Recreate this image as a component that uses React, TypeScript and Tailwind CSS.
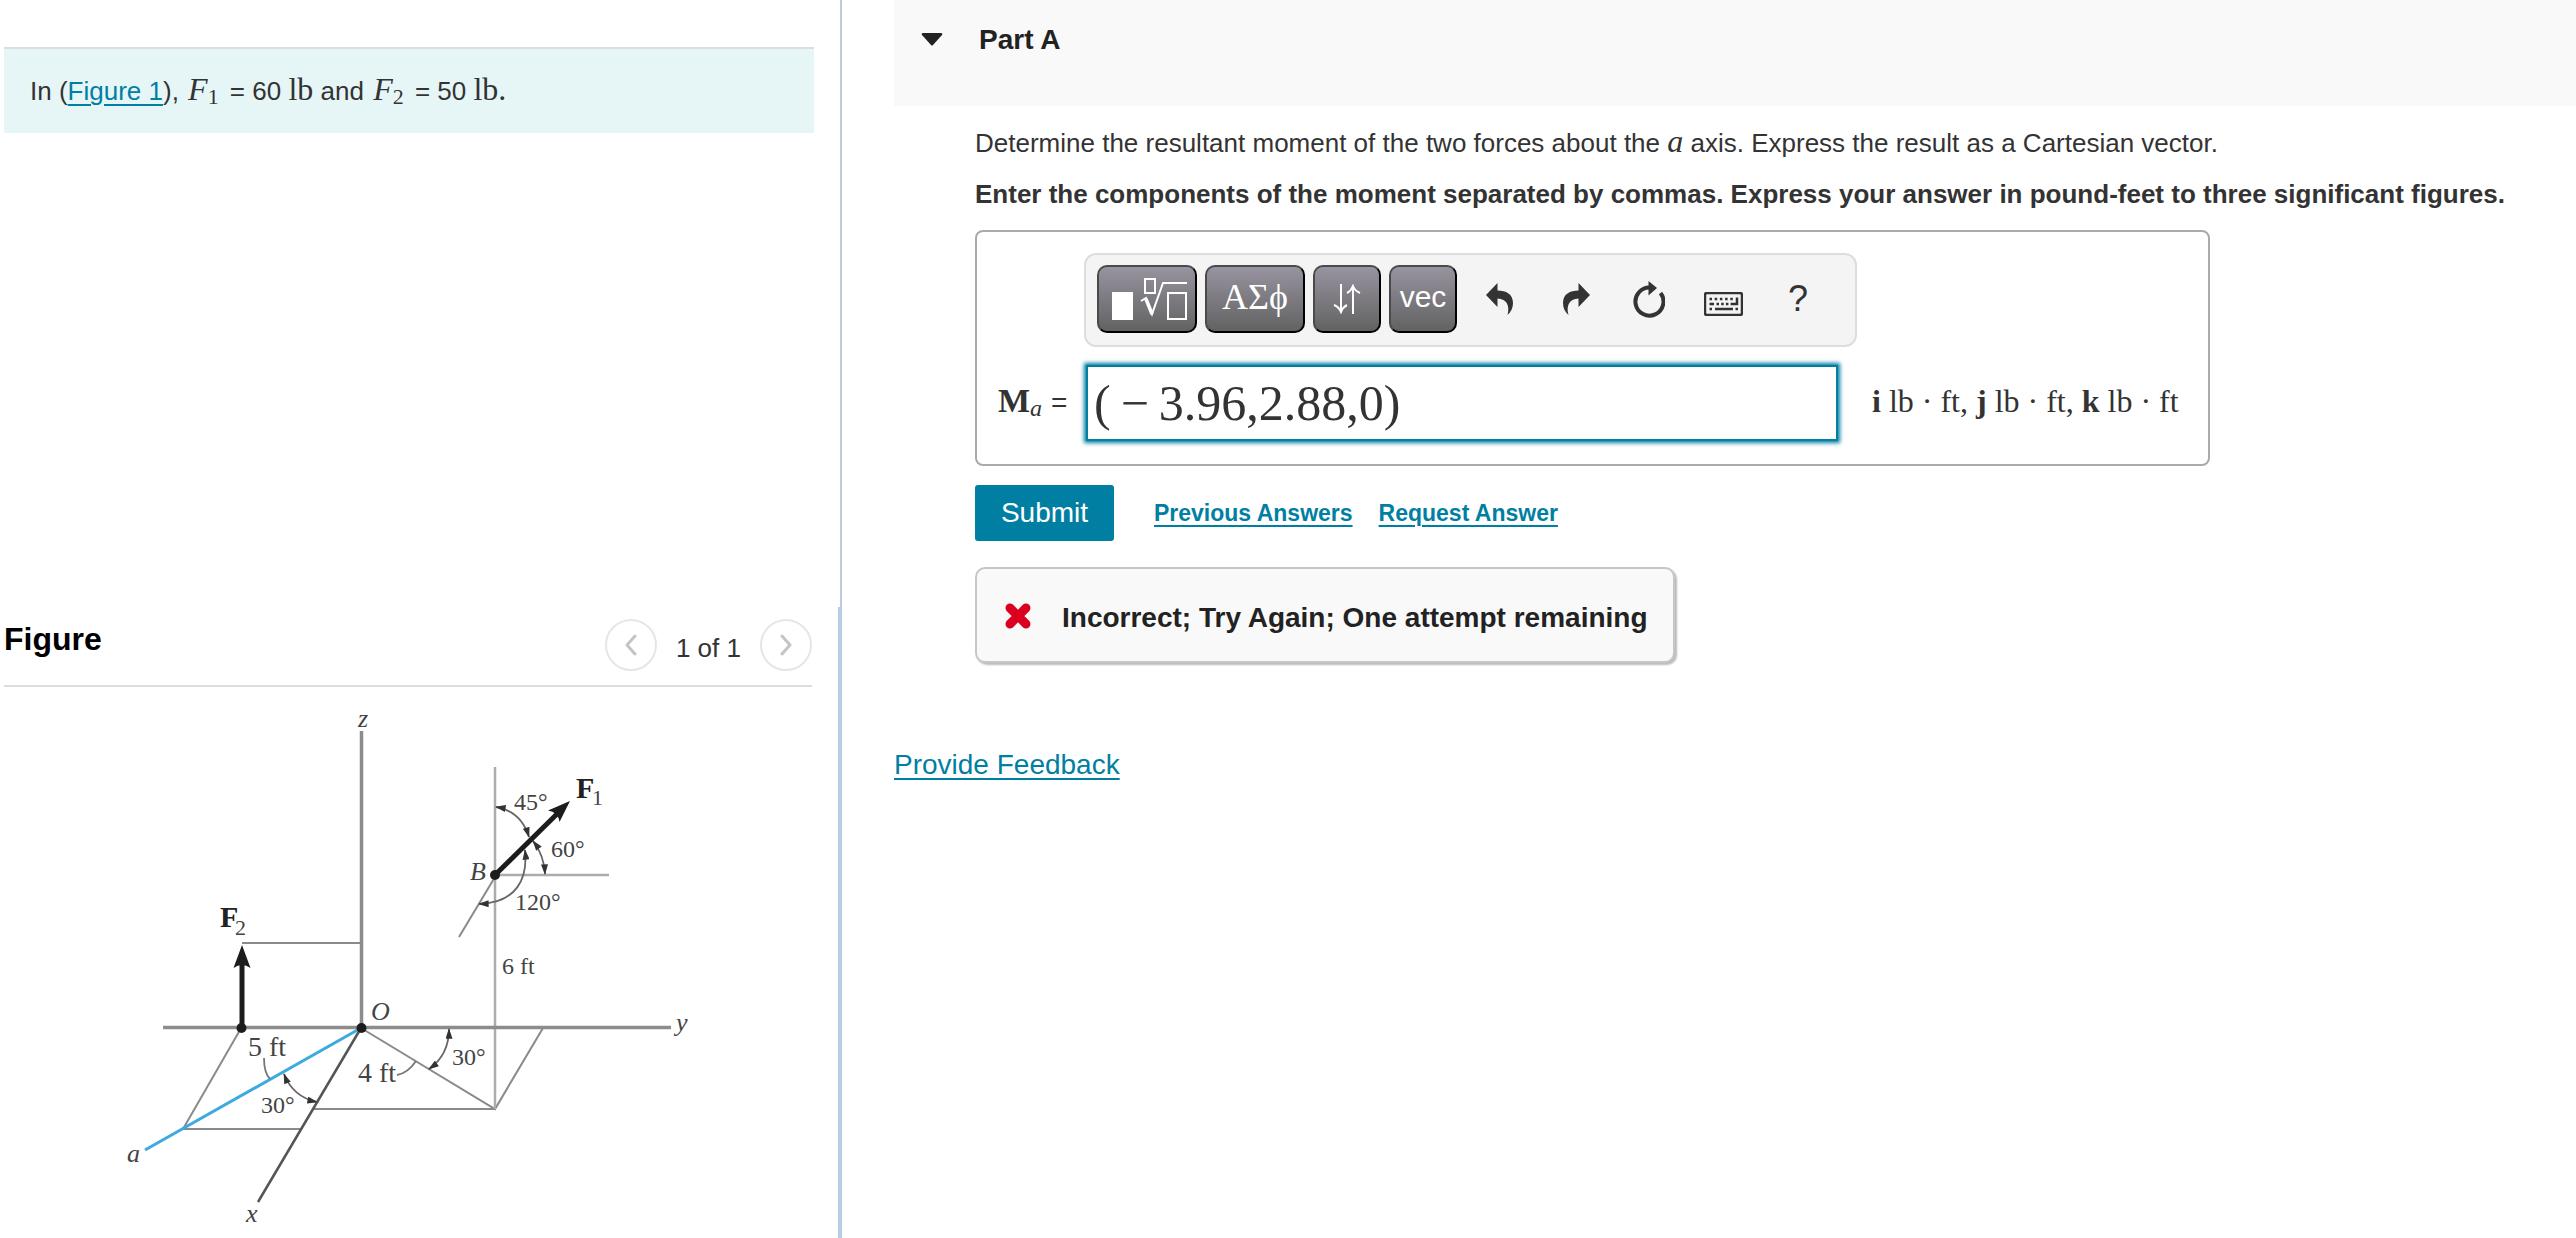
import type { ReactNode } from 'react';

interface ChildrenProps {
  children: ReactNode;
}

function MathText({ children }: ChildrenProps) {
  return (
    <span className="font-['Liberation_Serif',serif] text-[32px] leading-none">
      {children}
    </span>
  );
}

interface ForceSymbolProps {
  index: number;
}

function ForceSymbol({ index }: ForceSymbolProps) {
  return (
    <span className="mr-[4px] ml-[2px] font-['Liberation_Serif',serif] text-[32px] leading-none">
      <i>F</i>
      <sub className="bottom-[-4px] text-[22px]">{index}</sub>
    </span>
  );
}

function ProblemStatement() {
  return (
    <div className="mr-[26px] ml-1 h-[86px] border-t-2 border-[#ddd] bg-[#e6f6f7] px-[26px] pt-[24px] text-[26px] leading-[36px] whitespace-nowrap">
      In (
      <a
        href="#figure"
        className="text-[#007fa3] underline decoration-2 underline-offset-4"
      >
        Figure 1
      </a>
      ), <ForceSymbol index={1} /> = 60 <MathText>lb</MathText> and{' '}
      <ForceSymbol index={2} /> = 50 <MathText>lb.</MathText>
    </div>
  );
}

interface PagerButtonProps {
  label: string;
  points: string;
}

function PagerButton({ label, points }: PagerButtonProps) {
  return (
    <button
      type="button"
      aria-label={label}
      className="flex size-[52px] items-center justify-center rounded-full border-2 border-[#e6e6e6]"
    >
      <svg width="14" height="22" viewBox="0 0 14 22" fill="none">
        <polyline
          points={points}
          stroke="#c4c4c4"
          strokeWidth="3"
          strokeLinecap="round"
          strokeLinejoin="round"
        />
      </svg>
    </button>
  );
}

function ForceDiagram() {
  return (
    <svg
      width="620"
      height="535"
      viewBox="100 695 620 535"
      role="img"
      aria-label="Forces F1 and F2 acting about the a axis"
      className="ml-[96px] font-['Liberation_Serif',serif]"
    >
      <defs>
        <marker
          id="tip"
          viewBox="0 0 12 8"
          refX="11"
          refY="4"
          markerWidth="11"
          markerHeight="7"
          markerUnits="userSpaceOnUse"
          orient="auto-start-reverse"
        >
          <path d="M0 0 L12 4 L0 8 Z" fill="#333" />
        </marker>
      </defs>

      {/* construction lines */}
      <g stroke="#8a8a8a" strokeWidth="2" fill="none">
        <path d="M242 943 H361" />
        <path d="M240 1030 L183 1129 H302" />
        <path d="M361 1028 L495 1109 L543 1028" />
        <path d="M314 1109 H495" />
        <path d="M495 877 L459 937" />
      </g>
      <g stroke="#acacac" strokeWidth="2.5">
        <path d="M495 767 V1109" />
        <path d="M495 875 H609" />
      </g>

      {/* axes */}
      <g stroke="#8c8c8c" strokeWidth="3.5">
        <path d="M361.5 731 V1027" />
        <path d="M163 1027.5 H671" />
      </g>
      <path d="M361 1028 L258 1202" stroke="#555" strokeWidth="2.5" />
      <path d="M361 1028 L145 1150" stroke="#3dabdf" strokeWidth="3" />

      {/* angle arcs */}
      <g
        stroke="#666"
        strokeWidth="1.8"
        fill="none"
        markerStart="url(#tip)"
        markerEnd="url(#tip)"
      >
        <path d="M496 807 Q521 811 529 837" />
        <path d="M533 841 Q544 855 545 874" />
        <path d="M525 850 C528 878 517 903 479 904" />
        <path d="M284 1074 Q293 1097 317 1102" />
        <path d="M449 1029 Q449 1055 429 1069" />
      </g>
      <g stroke="#777" strokeWidth="1.8" fill="none">
        <path d="M264 1058 Q264 1073 270 1079" />
        <path d="M397 1075 Q408 1073 416 1061" />
      </g>

      {/* forces */}
      <g stroke="#1c1c1c" strokeWidth="5">
        <path d="M242 1027 V962" />
        <path d="M495 875 L558 813" />
      </g>
      <g fill="#1c1c1c">
        <path d="M242 945 L250.5 968 Q242 962 233.5 968 Z" />
        <path d="M570 801 L559.5 822 Q558 812 548 810.5 Z" />
        <circle cx="241.5" cy="1028" r="5" />
        <circle cx="361.5" cy="1028" r="5" />
        <circle cx="495" cy="875" r="5" />
      </g>

      <g fill="#444" fontSize="26" fontStyle="italic">
        <text x="358" y="727">z</text>
        <text x="676" y="1031">y</text>
        <text x="246" y="1222">x</text>
        <text x="127" y="1162">a</text>
        <text x="371" y="1020">O</text>
        <text x="470" y="880">B</text>
      </g>
      <g fill="#444" fontSize="24">
        <text x="514" y="810">45°</text>
        <text x="551" y="857">60°</text>
        <text x="515" y="910">120°</text>
        <text x="502" y="974">6 ft</text>
        <text x="452" y="1065">30°</text>
        <text x="261" y="1113">30°</text>
      </g>
      <g fill="#444" fontSize="28">
        <text x="248" y="1056">5 ft</text>
        <text x="358" y="1082">4 ft</text>
      </g>
      <g fill="#222" fontSize="30" fontWeight="700">
        <text x="220" y="927">F</text>
        <text x="576" y="798">F</text>
      </g>
      <g fill="#444" fontSize="22">
        <text x="235" y="935">2</text>
        <text x="592" y="805">1</text>
      </g>
    </svg>
  );
}

function FigurePanel() {
  return (
    <section id="figure" className="flex-1 border-r-4 border-[#b9cde0] pr-[26px] pl-1">
      <div className="flex h-[80px] items-start justify-between border-b-2 border-[#ddd] pt-[12px]">
        <h2 className="text-[32px] leading-[40px] font-bold text-black">
          Figure
        </h2>
        <div className="flex items-center gap-[19px] text-[26px]">
          <PagerButton label="Previous figure" points="11,2 3,11 11,20" />
          <span className="pt-[6px]">1 of 1</span>
          <PagerButton label="Next figure" points="3,2 11,11 3,20" />
        </div>
      </div>
      <div className="pt-[8px]">
        <ForceDiagram />
      </div>
    </section>
  );
}

interface PaletteButtonProps {
  label: string;
  wide?: boolean;
  children: ReactNode;
}

function PaletteButton({ label, wide, children }: PaletteButtonProps) {
  return (
    <button
      type="button"
      aria-label={label}
      className={`flex h-[68px] items-center justify-center rounded-[10px] border-2 border-t-[#4a4a4a] border-r-black border-b-black border-l-[#4a4a4a] bg-linear-to-b from-[#9894a0] to-[#626262] text-white ${
        wide ? 'w-[100px]' : 'w-[68px]'
      }`}
    >
      {children}
    </button>
  );
}

function TemplatesIcon() {
  return (
    <svg
      width="76"
      height="44"
      viewBox="0 0 76 44"
      fill="none"
      stroke="#fff"
      className="mt-[2px] ml-[5px]"
    >
      <rect x="0" y="14" width="21" height="28" fill="#fff" stroke="none" />
      <rect x="33" y="1" width="10" height="14" strokeWidth="2" />
      <path d="M29 23 L34 20 L40 36 L51 5 H75" strokeWidth="2" />
      <path d="M34 21 L40 36" strokeWidth="3.5" />
      <rect x="56" y="15" width="18" height="26" strokeWidth="2" />
    </svg>
  );
}

function SwapArrowsIcon() {
  return (
    <svg width="28" height="30" viewBox="0 0 28 30" fill="none" stroke="#fff">
      <path d="M8 0 V28 M20 30 V2" strokeWidth="2" />
      <path d="M1 21 Q6 23 8 28 Q10 23 14 21 M14 9 Q18 7 20 2 Q22 7 27 9" strokeWidth="2" />
    </svg>
  );
}

function UndoIcon() {
  return (
    <svg width="27" height="32" viewBox="0 0 27 32" fill="#333">
      <path d="M0 12 L11.5 0 V7.5 C20 7.5 27 11 27 20 C27 25 25 29 21.5 32 C24 23 21 16 11.5 15.5 V24 Z" />
    </svg>
  );
}

function RedoIcon() {
  return (
    <svg width="27" height="32" viewBox="0 0 27 32" fill="#333">
      <path d="M27 12 L15.5 0 V7.5 C7 7.5 0 11 0 20 C0 25 2 29 5.5 32 C3 23 6 16 15.5 15.5 V24 Z" />
    </svg>
  );
}

function ResetIcon() {
  return (
    <svg width="32" height="37" viewBox="0 0 32 37" fill="none">
      <path
        d="M27.5 12 A14 14 0 1 1 17 6.6"
        stroke="#333"
        strokeWidth="4"
      />
      <path d="M15.5 0 L24 7 L15.5 14.5 Z" fill="#333" />
    </svg>
  );
}

function KeyboardIcon() {
  return (
    <svg width="39" height="24" viewBox="0 0 39 24" fill="none" stroke="#333">
      <rect x="1" y="1" width="37" height="22" rx="2" strokeWidth="2.5" />
      <path d="M5.5 7 H30" strokeWidth="2.5" strokeDasharray="2.5 2.7" />
      <path d="M5.5 12 H10" strokeWidth="2.5" />
      <path d="M12.5 12 H29" strokeWidth="2.5" strokeDasharray="2.5 2.2" />
      <path d="M33 5.5 V12 H29" strokeWidth="2.5" />
      <path d="M5.5 17 H8 M11 17 H29 M31.5 17 H34" strokeWidth="2.5" />
    </svg>
  );
}

function EquationToolbar() {
  return (
    <div
      role="toolbar"
      className="flex h-[94px] w-[773px] items-center rounded-[12px] border-2 border-[#ddd] bg-[#f4f4f4] pb-[2px] pl-[11px]"
    >
      <div className="flex gap-2">
        <PaletteButton label="Templates" wide>
          <TemplatesIcon />
        </PaletteButton>
        <PaletteButton label="Greek letters" wide>
          <span className="pb-[4px] font-['Liberation_Serif',serif] text-[36px] leading-none">
            ΑΣϕ
          </span>
        </PaletteButton>
        <PaletteButton label="Arrows">
          <SwapArrowsIcon />
        </PaletteButton>
        <PaletteButton label="Vectors">
          <span className="pb-[4px] text-[30px] leading-none">vec</span>
        </PaletteButton>
      </div>
      <div className="flex items-center pl-[29px]">
        <button type="button" aria-label="Undo" className="mr-[50px]">
          <UndoIcon />
        </button>
        <button type="button" aria-label="Redo" className="mr-[43px]">
          <RedoIcon />
        </button>
        <button type="button" aria-label="Reset" className="mr-[39px]">
          <ResetIcon />
        </button>
        <button type="button" aria-label="Keyboard" className="mt-[10px] mr-[45px]">
          <KeyboardIcon />
        </button>
        <button type="button" aria-label="Help" className="text-[36px] leading-none">
          ?
        </button>
      </div>
    </div>
  );
}

function AnswerBox() {
  return (
    <div className="h-[236px] w-[1235px] rounded-[8px] border-2 border-[#aaa] pt-[21px]">
      <div className="pl-[107px]">
        <EquationToolbar />
      </div>
      <div className="flex items-center pt-[18px] whitespace-nowrap">
        <label
          htmlFor="answer"
          className="w-[109px] pb-[4px] pl-[21px] font-['Liberation_Serif',serif] text-[34px] leading-none"
        >
          <b>M</b>
          <sub className="bottom-[-4px] text-[24px] italic">a</sub>
          <span className="pl-[9px] font-['Liberation_Sans',sans-serif] text-[28px]">
            =
          </span>
        </label>
        <input
          id="answer"
          type="text"
          defaultValue={'(\u2009−\u20093.96,2.88,0)'}
          className="h-[76px] w-[752px] border-2 border-[#007fa3] bg-white pl-[6px] font-['Liberation_Serif',serif] text-[50px] shadow-[0_0_4px_2px_#007fa3] outline-none"
        />
        <span className="pb-[5px] pl-[34px] font-['Liberation_Serif',serif] text-[32px]">
          <b>i</b> lb · ft, <b>j</b> lb · ft, <b>k</b> lb · ft
        </span>
      </div>
    </div>
  );
}

function ActionRow() {
  return (
    <div className="flex items-center pt-[19px] text-[23px] font-bold text-[#007fa3]">
      <button
        type="button"
        className="h-[56px] w-[139px] rounded-[3px] bg-[#007fa3] text-[28px] font-normal text-white"
      >
        Submit
      </button>
      <a href="#previous" className="ml-[40px] underline decoration-2 underline-offset-4">
        Previous Answers
      </a>
      <a href="#request" className="ml-[26px] underline decoration-2 underline-offset-4">
        Request Answer
      </a>
    </div>
  );
}

function ResultNotice() {
  return (
    <div
      role="status"
      className="mt-[26px] flex h-[96px] w-[700px] items-center rounded-[10px] border-2 border-[#c6c6c6] bg-[#f9f9f9] pt-[6px] pl-[27px] text-[28px] font-bold whitespace-nowrap text-[#222] shadow-[2px_2px_2px_#bbb]"
    >
      <svg width="28" height="28" viewBox="0 0 28 28" className="mb-[4px]">
        <path
          d="M6 6 L22 22 M22 6 L6 22"
          stroke="#dc0020"
          strokeWidth="9"
          strokeLinecap="round"
        />
      </svg>
      <span className="pl-[30px]">Incorrect; Try Again; One attempt remaining</span>
    </div>
  );
}

function QuestionPart() {
  return (
    <main className="min-w-0 flex-1 pl-[52px]">
      <header className="flex h-[106px] items-start bg-[#f9f9f9] pt-[24px] pl-[27px] text-[#222]">
        <button
          type="button"
          aria-label="Collapse part A"
          className="flex h-[30px] items-center"
        >
          <svg width="22" height="13" viewBox="0 0 22 13" fill="#222">
            <path d="M2 0 H20 Q22 0 21 2 L12 12 Q11 13 10 12 L1 2 Q0 0 2 0 Z" />
          </svg>
        </button>
        <h1 className="pl-[36px] text-[28px] leading-[32px] font-bold">Part A</h1>
      </header>
      <div className="pl-[81px]">
        <p className="pt-[19px] text-[26px] leading-[36px] whitespace-nowrap">
          Determine the resultant moment of the two forces about the{' '}
          <MathText>
            <i>a</i>
          </MathText>{' '}
          axis. Express the result as a Cartesian vector.
        </p>
        <p className="pt-[15px] pb-[18px] text-[26px] leading-[36px] font-bold whitespace-nowrap">
          Enter the components of the moment separated by commas. Express your answer in
          pound-feet to three significant figures.
        </p>
        <AnswerBox />
        <ActionRow />
        <ResultNotice />
      </div>
      <a
        href="#feedback"
        className="mt-[84px] inline-block text-[28px] leading-[36px] text-[#007fa3] underline decoration-2 underline-offset-4"
      >
        Provide Feedback
      </a>
    </main>
  );
}

export default function App() {
  return (
    <div className="flex min-h-screen bg-white font-['Liberation_Sans',Arial,sans-serif] text-[#333]">
      <aside className="flex w-[842px] shrink-0 flex-col">
        <section className="min-h-[607px] border-r-2 border-[#b9cde0] pt-[47px]">
          <ProblemStatement />
        </section>
        <FigurePanel />
      </aside>
      <QuestionPart />
    </div>
  );
}
